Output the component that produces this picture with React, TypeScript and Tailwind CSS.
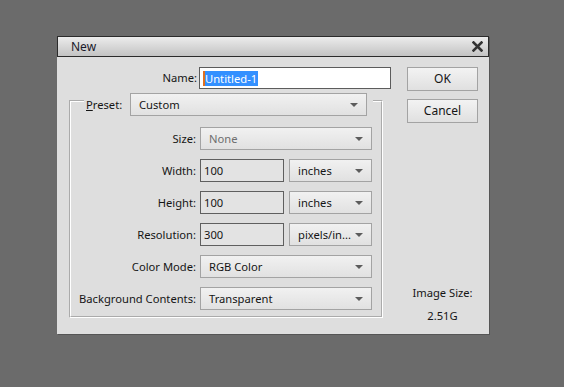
import React from "react";

const font = { fontFamily: '"Noto Sans", "Liberation Sans", sans-serif' };

function Arrow() {
  return (
    <svg width="8" height="4" viewBox="0 0 8 4" className="shrink-0">
      <path d="M0 0 H8 L4 4 Z" fill="#5c5c5c" />
    </svg>
  );
}

function Select({ value, disabled, w }: { value: string; disabled?: boolean; w: string }) {
  return (
    <div
      className={`${w} h-[23px] flex items-center justify-between pl-[8px] pr-[8px] border border-[#a3a3a3] bg-gradient-to-b from-[#f1f1f1] to-[#e1e1e1] ${disabled ? "text-[#6e6e6e]" : "text-[#151515]"}`}
    >
      <span className="whitespace-nowrap">{value}</span>
      <Arrow />
    </div>
  );
}

function Field({ value }: { value: string }) {
  return (
    <div className="w-[84px] h-[23px] flex items-center pl-[3px] border border-[#5f5f5f] bg-[#e3e3e3] text-[#151515]">
      {value}
    </div>
  );
}

function Row({ label, children }: { label: string; children: React.ReactNode }) {
  return (
    <div className="flex items-center h-[23px]">
      <div className="w-[121px] pr-[4px] text-right whitespace-nowrap text-[#151515]">{label}</div>
      <div className="flex gap-[5px]">{children}</div>
    </div>
  );
}

export default function App() {
  return (
    <div className="w-[564px] h-[387px] bg-[#6b6b6b] pl-[57px] pt-[36px] text-[11.2px] leading-[16px]" style={font}>
      <div className="w-[432px] h-[298px] bg-[#dedede] flex flex-col shadow-[1px_1px_0_#555]">
        <div className="h-[21px] border border-[#2b2b2b] bg-gradient-to-b from-[#ececec] to-[#c3c3c3] flex items-center justify-between pl-[13px] pr-[5px] text-[12px] text-[#1a1a2a]">
          <span>New</span>
          <svg width="11" height="11" viewBox="0 0 11 11">
            <path d="M1.5 1.5 L9.5 9.5 M9.5 1.5 L1.5 9.5" stroke="#333" strokeWidth="2.6" strokeLinecap="square" />
          </svg>
        </div>
        <div className="flex-1 flex">
          <div className="w-[350px] flex flex-col pt-[10px]">
            <div className="flex items-center">
              <div className="w-[142px] pr-[2px] text-right text-[#151515]">Name:</div>
              <div className="w-[192px] h-[22px] flex items-center pl-[3px] border border-[#5c5c5c] bg-white">
                <span className="bg-[#3390ff] text-white border-l-2 border-[#e07020] pr-[1px] leading-[15px]">Untitled-1</span>
              </div>
            </div>
            <fieldset className="ml-[12px] mt-[-3px] w-[314px] h-[232px] border-2 [border-style:groove] border-white pl-[8px] pr-[6px] pt-[11px] pb-[6px] flex flex-col gap-[9px]">
              <legend className="ml-[5px] pl-[2px] pr-[6px] pt-[7px] flex items-center">
                <span className="w-[44px] text-[#151515]">
                  <span className="underline">P</span>reset:
                </span>
                <Select value="Custom" w="w-[237px]" />
              </legend>
              <Row label="Size:">
                <Select value="None" disabled w="w-[172px]" />
              </Row>
              <Row label="Width:">
                <Field value="100" />
                <Select value="inches" w="w-[83px]" />
              </Row>
              <Row label="Height:">
                <Field value="100" />
                <Select value="inches" w="w-[83px]" />
              </Row>
              <Row label="Resolution:">
                <Field value="300" />
                <Select value="pixels/in..." w="w-[83px]" />
              </Row>
              <Row label="Color Mode:">
                <Select value="RGB Color" w="w-[172px]" />
              </Row>
              <Row label="Background Contents:">
                <Select value="Transparent" w="w-[172px]" />
              </Row>
            </fieldset>
          </div>
          <div className="w-[71px] flex flex-col pt-[10px] text-[#151515]">
            <button className="h-[24px] border border-[#a3a3a3] bg-gradient-to-b from-[#f3f3f3] to-[#e0e0e0] text-[12px]">OK</button>
            <button className="mt-[8px] h-[24px] border border-[#a3a3a3] bg-gradient-to-b from-[#f3f3f3] to-[#e0e0e0] text-[12px]">Cancel</button>
            <div className="mt-[162px] text-center">Image Size:</div>
            <div className="mt-[7px] text-center">2.51G</div>
          </div>
        </div>
      </div>
    </div>
  );
}
